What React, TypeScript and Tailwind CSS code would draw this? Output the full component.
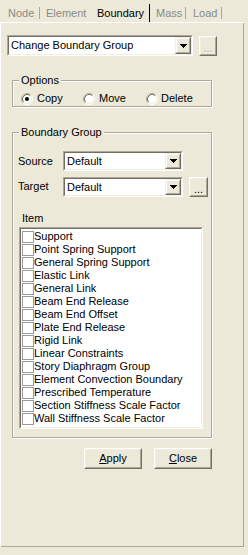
import React from "react";

const items = [
  "Support",
  "Point Spring Support",
  "General Spring Support",
  "Elastic Link",
  "General Link",
  "Beam End Release",
  "Beam End Offset",
  "Plate End Release",
  "Rigid Link",
  "Linear Constraints",
  "Story Diaphragm Group",
  "Element Convection Boundary",
  "Prescribed Temperature",
  "Section Stiffness Scale Factor",
  "Wall Stiffness Scale Factor",
];

function Arrow() {
  return (
    <svg width="7" height="4" viewBox="0 0 7 4" shapeRendering="crispEdges">
      <rect x="0" y="0" width="7" height="1" fill="#000" />
      <rect x="1" y="1" width="5" height="1" fill="#000" />
      <rect x="2" y="2" width="3" height="1" fill="#000" />
      <rect x="3" y="3" width="1" height="1" fill="#000" />
    </svg>
  );
}

function DropButton() {
  return (
    <div className="flex w-[16px] border border-t-[#F1EFE2] border-l-[#F1EFE2] border-b-[#716F64] border-r-[#716F64] bg-[#ECE9D8]">
      <div className="flex flex-1 items-center justify-center border border-t-white border-l-white border-b-[#ACA899] border-r-[#ACA899]">
        <Arrow />
      </div>
    </div>
  );
}

function Combo({ w, h, text }: { w: string; h: string; text: string }) {
  return (
    <div className={`flex ${w} ${h} border border-t-[#ACA899] border-l-[#ACA899] border-b-white border-r-white`}>
      <div className="flex flex-1 border border-t-[#716F64] border-l-[#716F64] border-b-[#F1EFE2] border-r-[#F1EFE2] bg-white">
        <div className="flex flex-1 items-center pl-[2px] text-black">{text}</div>
        <DropButton />
      </div>
    </div>
  );
}

function RaisedBox({
  className,
  children,
}: {
  className: string;
  children: React.ReactNode;
}) {
  return (
    <div className={`flex ${className} border border-t-white border-l-white border-b-[#716F64] border-r-[#716F64] bg-[#ECE9D8]`}>
      <div className="flex flex-1 items-center justify-center border border-t-[#F1EFE2] border-l-[#F1EFE2] border-b-[#ACA899] border-r-[#ACA899]">
        {children}
      </div>
    </div>
  );
}

function Radio({ checked }: { checked?: boolean }) {
  return (
    <svg width="12" height="12" viewBox="0 0 12 12">
      <circle cx="6" cy="6" r="5" fill="#fff" />
      <path d="M2.11 9.89 A5.5 5.5 0 0 1 9.89 2.11" fill="none" stroke="#ACA899" strokeWidth="1" />
      <path d="M9.89 2.11 A5.5 5.5 0 0 1 2.11 9.89" fill="none" stroke="#fff" strokeWidth="1" />
      <path d="M2.82 9.18 A4.5 4.5 0 0 1 9.18 2.82" fill="none" stroke="#716F64" strokeWidth="1" />
      <path d="M9.18 2.82 A4.5 4.5 0 0 1 2.82 9.18" fill="none" stroke="#F1EFE2" strokeWidth="1" />
      {checked && <circle cx="6" cy="6" r="2" fill="#000" />}
    </svg>
  );
}

function Group({
  label,
  className,
  children,
}: {
  label: string;
  className: string;
  children?: React.ReactNode;
}) {
  return (
    <div className={`relative border border-[#ACA899] shadow-[inset_1px_1px_0_#fff,1px_1px_0_#fff] ${className}`}>
      <span className="absolute left-[6px] top-[-8px] bg-[#ECE9D8] px-[2px] leading-[14px] text-black">
        {label}
      </span>
      {children}
    </div>
  );
}

function Sep() {
  return <div className="mt-[7px] h-[12px] w-px bg-[#ACA899]" />;
}

export default function App() {
  return (
    <div className="flex h-[555px] w-[248px] flex-col bg-[#ECE9D8] font-['Liberation_Sans',Arial,sans-serif] text-[11px] leading-[13px] text-black">
      {/* Tabs */}
      <div className="flex h-[22px] text-[#8A8A8A]">
        <div className="w-[8px]" />
        <div className="w-[31px] pt-[7px]">Node</div>
        <Sep />
        <div className="w-[48px] pl-[6px] pt-[7px]">Element</div>
        <div className="w-[61px] pl-[9px] pt-[7px] text-black">Boundary</div>
        <div className="mt-[4px] h-[18px] w-px bg-black" />
        <div className="w-[35px] pl-[6px] pt-[7px]">Mass</div>
        <Sep />
        <div className="w-[35px] pl-[7px] pt-[7px]">Load</div>
        <Sep />
      </div>

      {/* Panel */}
      <div className="flex h-[525px] w-[244px] flex-col shadow-[inset_1px_1px_0_#fff,inset_-1px_-1px_0_#ACA899]">
        <div className="ml-[7px] mt-[13px] flex gap-[6px]">
          <Combo w="w-[186px]" h="h-[21px]" text="Change Boundary Group" />
          <RaisedBox className="mt-[1px] h-[20px] w-[18px]">
            <span className="pt-[4px] text-[#ACA899] [text-shadow:1px_1px_0_#fff]">...</span>
          </RaisedBox>
        </div>

        <Group label="Options" className="ml-[12px] mt-[24px] h-[27px] w-[200px]">
          <div className="flex h-[13px] items-center pl-[8px] pt-[0px] mt-[11px]">
            <div className="flex w-[62px] items-center gap-[4px]">
              <Radio checked />
              <span>Copy</span>
            </div>
            <div className="flex w-[63px] items-center gap-[4px]">
              <Radio />
              <span>Move</span>
            </div>
            <div className="flex items-center gap-[3px]">
              <Radio />
              <span>Delete</span>
            </div>
          </div>
        </Group>

        <Group label="Boundary Group" className="ml-[12px] mt-[25px] h-[306px] w-[200px]">
          <div className="flex flex-col">
            <div className="mt-[18px] flex items-center pl-[5px]">
              <span className="w-[45px]">Source</span>
              <Combo w="w-[120px]" h="h-[20px]" text="Default" />
            </div>
            <div className="mt-[6px] flex items-center pl-[5px]">
              <span className="w-[45px] pb-[2px]">Target</span>
              <Combo w="w-[120px]" h="h-[20px]" text="Default" />
              <RaisedBox className="ml-[6px] h-[20px] w-[19px]">
                <span className="pt-[4px] text-black">...</span>
              </RaisedBox>
            </div>
            <div className="mt-[15px] pl-[9px]">Item</div>
            <div className="ml-[6px] mt-[2px] flex h-[202px] w-[184px] border border-t-[#ACA899] border-l-[#ACA899] border-b-white border-r-white">
              <div className="flex flex-1 flex-col border border-t-[#716F64] border-l-[#716F64] border-b-[#F1EFE2] border-r-[#F1EFE2] bg-white pt-[1px]">
                {items.map((it) => (
                  <div key={it} className="flex h-[13px] items-center">
                    <div className="ml-[1px] h-[12px] w-[12px] border border-[#9A9A9A] bg-white" />
                    <span className="whitespace-nowrap leading-[13px]">{it}</span>
                  </div>
                ))}
              </div>
            </div>
          </div>
        </Group>

        <div className="ml-[84px] mt-[10px] flex gap-[12px]">
          <RaisedBox className="h-[21px] w-[58px]">
            <span>
              <span className="underline underline-offset-[1px]">A</span>pply
            </span>
          </RaisedBox>
          <RaisedBox className="h-[21px] w-[58px]">
            <span>
              <span className="underline underline-offset-[1px]">C</span>lose
            </span>
          </RaisedBox>
        </div>
      </div>
    </div>
  );
}
